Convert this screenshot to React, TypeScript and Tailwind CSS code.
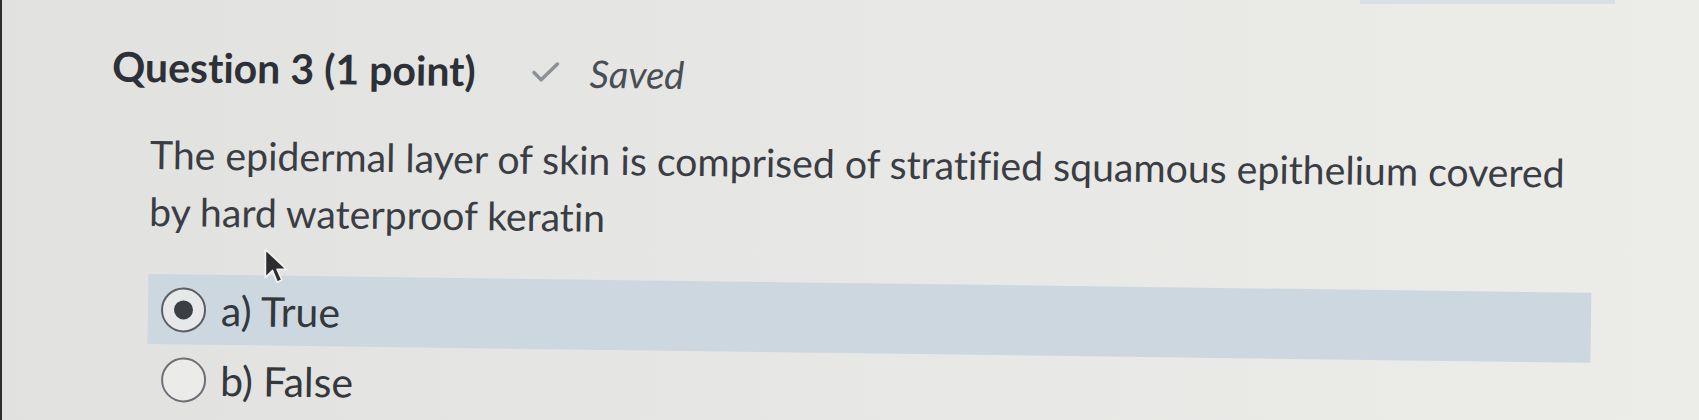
import { Check } from "lucide-react";

const options = [
  { key: "a", label: "True", selected: true },
  { key: "b", label: "False", selected: false },
];

const Radio = ({ selected }: { selected: boolean }) => (
  <span
    className={
      selected
        ? "flex h-[45px] w-[45px] shrink-0 items-center justify-center rounded-full border-2 border-[#5a5e63] bg-[#e6e8e9]"
        : "flex h-[45px] w-[45px] shrink-0 items-center justify-center rounded-full border-2 border-[#6c7074] bg-[#ebebea]"
    }
  >
    {selected && <span className="h-[19px] w-[19px] rounded-full bg-[#3b3e43]" />}
  </span>
);

const Pointer = () => (
  <svg className="absolute left-[263px] top-[246px]" width="26" height="42" viewBox="0 0 22 34">
    <path
      d="M2 2 L2 26 L8 20 L12 30 L16 28 L12 19 L20 19 Z"
      fill="#2b2d31"
      stroke="#f2f2f2"
      strokeWidth="1.5"
      strokeLinejoin="round"
    />
  </svg>
);

export default function App() {
  return (
    <div className="relative flex h-[420px] w-full overflow-hidden bg-gradient-to-r from-[#e1e1df] via-[#e7e7e5] to-[#ecece9] font-[Lato,sans-serif] [font-variant-ligatures:none]">
      <div className="w-[2px] shrink-0 bg-[#2e2e2e]" />
      <div className="flex flex-1 flex-col">
        <div className="ml-[1358px] h-[4px] w-[255px] bg-[#d8e0e6]" />
        <div className="origin-top-left rotate-[0.75deg] pl-[150px] pt-[33px]">
          <div className="-ml-[39px] flex items-baseline">
            <h1 className="text-[41px] font-bold leading-[50px] text-[#2d3036]">Question 3 (1 point)</h1>
            <Check className="ml-[52px] h-[35px] w-[35px] self-center text-[#8b9195]" strokeWidth={2.4} />
            <span className="ml-[27px] text-[38px] italic text-[#4a4e54]">Saved</span>
          </div>
          <p className="mt-[29px] text-[39.2px] leading-[57px] text-[#3a3d43]">
            The epidermal layer of skin is comprised of stratified squamous epithelium covered
            <br />
            by hard waterproof keratin
          </p>
          <div className="mt-[35px] flex w-[1443px] flex-col">
            {options.map((o) => (
              <label
                key={o.key}
                className={
                  o.selected
                    ? "flex h-[70px] items-center gap-[15px] bg-[#cdd7df] pl-[13px] pt-[1px]"
                    : "flex h-[70px] items-center gap-[14px] pl-[14px] pt-[1px]"
                }
              >
                <Radio selected={o.selected} />
                <span className="text-[41px] leading-[41px] text-[#34373c]">
                  {o.key}) {o.label}
                </span>
              </label>
            ))}
          </div>
        </div>
      </div>
      <Pointer />
    </div>
  );
}
